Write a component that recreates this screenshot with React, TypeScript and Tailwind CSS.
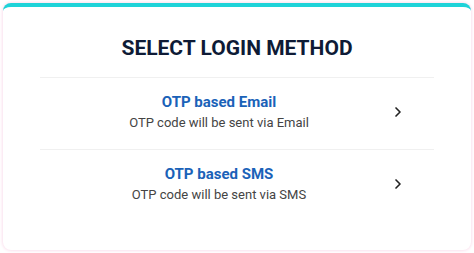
import { ChevronRight } from 'lucide-react';

const methods = [
  { title: 'OTP based Email', hint: 'OTP code will be sent via Email' },
  { title: 'OTP based SMS', hint: 'OTP code will be sent via SMS' },
];

export default function App() {
  return (
    <div className="w-[474px] h-[253px] bg-white p-[3px] font-['Roboto',sans-serif]">
      <div className="h-full rounded-lg border-t-4 border-[#1fd3d8] bg-white shadow-[0_0_3px_1px_#fbe1ee] px-[37px]">
        <h1 className="pt-[29px] pb-[17px] text-center text-[21px] leading-[24px] font-bold text-[#0e1b36]">
          SELECT LOGIN METHOD
        </h1>
        {methods.map((m) => (
          <div key={m.title} className="flex items-center border-t border-[#f0f0f0] pt-[15px] pb-[18px]">
            <div className="flex-1 pl-2 text-center">
              <div className="text-[15px] leading-[19px] font-bold text-[#1a62b8]">{m.title}</div>
              <div className="mt-[2px] text-[13px] leading-[17px] text-[#444]">{m.hint}</div>
            </div>
            <ChevronRight className="w-4 h-4 mr-[28px] text-[#222]" strokeWidth={2.5} />
          </div>
        ))}
      </div>
    </div>
  );
}
